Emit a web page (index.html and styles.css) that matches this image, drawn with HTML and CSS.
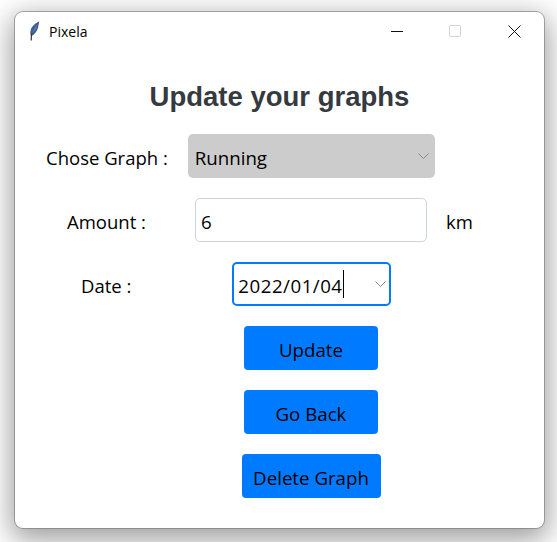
FILE: index.html
```html
<!DOCTYPE html>
<html lang="en">
<head>
<meta charset="utf-8">
<title>Pixela</title>
<link rel="stylesheet" href="styles.css">
</head>
<body>
<div class="window">
  <header class="titlebar">
    <svg class="app-icon" viewBox="0 0 12 20" width="12" height="20" aria-hidden="true">
      <path class="quill" d="M11.2 0.6 C7.6 2 3.6 5.4 2.6 9.4 C2 12 2.4 14 3.6 15 C6.4 13.4 8.8 10.4 9.8 7.4 C10.6 5 10.8 2.8 11.2 0.6 Z"/>
      <path class="quill-light" d="M9.6 3 C7.4 5.4 5.6 8.4 4.6 12 C6.6 10 8.2 7.4 9.6 3 Z"/>
      <path class="quill-stem" d="M3.5 12.5 L3.2 19.5"/>
    </svg>
    <span class="app-name">Pixela</span>
    <div class="win-controls">
      <span class="win-btn"><svg viewBox="0 0 12 12" width="12" height="12"><path d="M0 6.5H12.5" class="stroke"/></svg></span>
      <span class="win-btn win-btn-max"><svg viewBox="0 0 12 12" width="12" height="12"><rect x="0.5" y="0.5" width="11" height="11" rx="1.5" class="stroke-off"/></svg></span>
      <span class="win-btn"><svg viewBox="0 0 13 13" width="13" height="13"><path d="M0.5 0.5L12.5 12.5M12.5 0.5L0.5 12.5" class="stroke"/></svg></span>
    </div>
  </header>

  <h1 class="heading">Update your graphs</h1>

  <div class="row row-graph">
    <span class="label">Chose Graph :</span>
    <div class="combo combo-graph">
      <span class="value">Running</span>
      <svg class="chevron" viewBox="0 0 11 6" width="11" height="6"><path d="M0.5 0.5L5.5 5.5L10.5 0.5"/></svg>
    </div>
  </div>

  <div class="row row-amount">
    <span class="label">Amount :</span>
    <input class="field" type="text" value="6">
    <span class="label">km</span>
  </div>

  <div class="row row-date">
    <span class="label">Date :</span>
    <div class="combo combo-date">
      <span class="value date-text">2022/01/04</span><span class="caret"></span>
      <svg class="chevron" viewBox="0 0 11 6" width="11" height="6"><path d="M0.5 0.5L5.5 5.5L10.5 0.5"/></svg>
    </div>
  </div>

  <div class="actions">
    <button class="btn btn-std" type="button">Update</button>
    <button class="btn btn-std" type="button">Go Back</button>
    <button class="btn btn-wide" type="button">Delete Graph</button>
  </div>
</div>
</body>
</html>
```

FILE: styles.css
```css
* { box-sizing: border-box; }
html, body { margin: 0; height: 100%; }
body {
  width: 557px;
  height: 542px;
  overflow: hidden;
  padding: 12px 13px 14px 15px;
  background: #fff;
  font-family: "Open Sans", "Noto Sans", sans-serif;
  color: #000;
}
.window {
  width: 529px;
  height: 516px;
  background: #fff;
  border-radius: 8px;
  box-shadow: 0 0 0 1px rgba(110,110,110,.55), 0 8px 28px 4px rgba(0,0,0,.38);
}
.titlebar {
  display: flex;
  align-items: center;
  height: 38px;
  padding-left: 13px;
}
.app-icon { margin-right: 9px; }
.quill { fill: #3f5f92; }
.quill-light { fill: #6384b3; }
.quill-stem { stroke: #333; stroke-width: 1.2; fill: none; }
.app-name { font-size: 14px; }
.win-controls { display: flex; margin-left: auto; }
.win-btn {
  width: 59px;
  height: 38px;
  display: flex;
  align-items: center;
  justify-content: center;
}
.win-btn-max { padding-right: 2px; }
.stroke { stroke: #111; stroke-width: 1; fill: none; }
.stroke-off { stroke: #d2d2d2; stroke-width: 1; fill: none; }
.heading {
  margin: 29px 0 19px;
  height: 36px;
  line-height: 36px;
  text-align: center;
  font-family: "Liberation Sans", Arial, sans-serif;
  font-size: 27.5px;
  font-weight: 700;
  color: #343a40;
}
.row {
  display: flex;
  align-items: center;
  height: 44px;
  margin-bottom: 20px;
  font-size: 18.5px;
}
.label { white-space: nowrap; padding-top: 3px; }
.value { padding-top: 3px; font-size: 18.7px; }
.row-graph { padding-left: 31px; gap: 20px; }
.row-amount { padding-left: 52px; gap: 49px; }
.row-amount .field { margin-right: -30px; }
.row-date { padding-left: 66px; gap: 101px; }
.combo {
  height: 44px;
  display: flex;
  align-items: center;
  position: relative;
  border-radius: 5px;
}
.combo-graph {
  width: 247px;
  padding-left: 7px;
  background: #ccc;
}
.combo-graph .chevron { position: absolute; right: 6px; top: 19px; }
.combo-date {
  width: 159px;
  padding-left: 4px;
  border: 2px solid #007bff;
  background: #fff;
}
.combo-date .chevron { position: absolute; right: 3px; top: 17px; }
.date-text { letter-spacing: 0.5px; }
.caret {
  width: 1px;
  height: 28px;
  background: #000;
}
.chevron path { fill: none; stroke: #8a8a8a; stroke-width: 1; }
.field {
  width: 232px;
  height: 44px;
  padding: 3px 5px 0;
  border: 1px solid #ced4da;
  border-radius: 5px;
  background: #fff;
  font: inherit;
  font-size: 18.7px;
  color: #000;
  outline: none;
}
.actions {
  display: flex;
  flex-direction: column;
  align-items: center;
  gap: 20px;
  padding-left: 63px;
}
.btn {
  height: 44px;
  border: 0;
  border-radius: 4px;
  background: #007bff;
  color: #000;
  font-family: inherit;
  font-size: 18.7px;
  padding: 2px 0 0;
}
.btn-std { width: 134px; }
.btn-wide { width: 139px; }
```
